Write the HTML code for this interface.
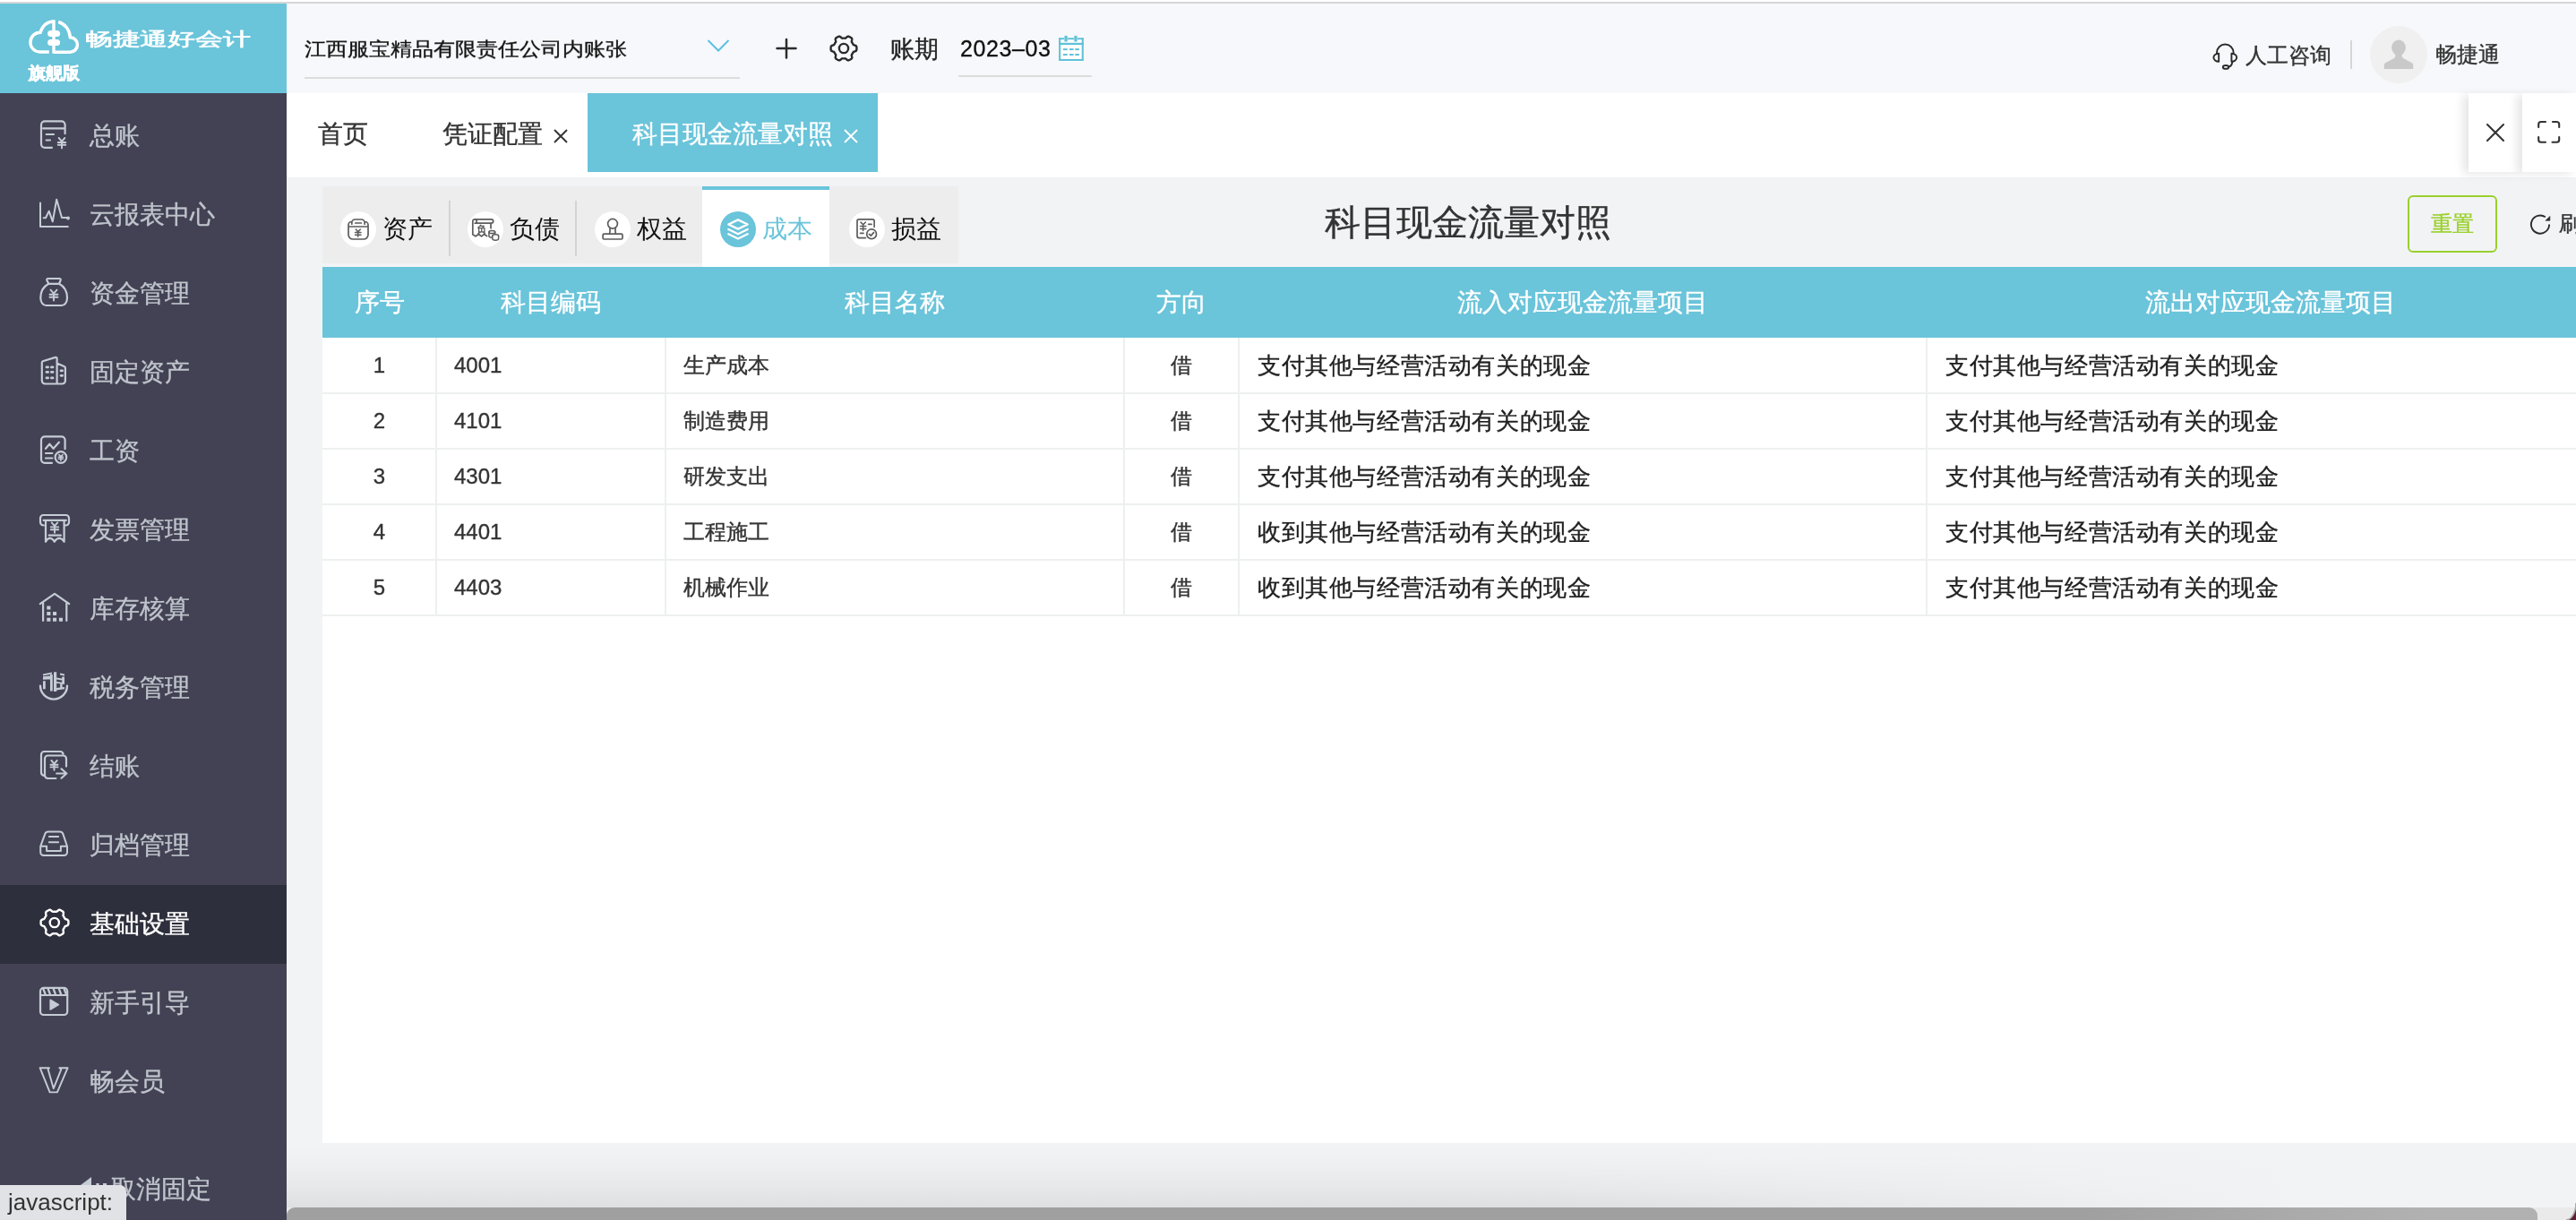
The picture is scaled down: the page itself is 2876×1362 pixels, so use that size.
<!DOCTYPE html>
<html><head><meta charset="utf-8">
<style>
*{margin:0;padding:0;box-sizing:border-box}
html,body{width:2876px;height:1362px;overflow:hidden;background:#fff;font-family:"Liberation Sans",sans-serif;color:#333}
.abs{position:absolute}
svg{will-change:transform}
.hd,.td,.th,.mi .t,.st span{will-change:transform;-webkit-text-stroke:0.35px currentColor}
#topline{left:0;top:2px;width:2876px;height:2px;background:#d6d6d8}
#logo{left:0;top:4px;width:320px;height:100px;background:#6ac4da}
#side{left:0;top:104px;width:320px;height:1258px;background:#434254}
#hdr{left:320px;top:4px;width:2556px;height:100px;background:#f7f8fb}
#tabbar{left:320px;top:104px;width:2556px;height:94px;background:#fff}
#content{left:320px;top:198px;width:2556px;height:1164px;background:#f2f3f5}
.mi{position:absolute;left:0;width:320px;height:88px}
.mi .t{position:absolute;left:100px;top:0;line-height:88px;font-size:28px;color:#bfc4cc;white-space:nowrap}
.mi svg{position:absolute;left:36px;top:18px}
.mi.act{background:#2e2f3c}
.mi.act .t{color:#fff}
.hd{position:absolute;white-space:nowrap}
.logo-t{font-size:31px;color:#fff;line-height:40px;font-weight:500;transform:scaleY(0.66);transform-origin:0 50%;letter-spacing:-0.3px;-webkit-text-stroke:1px #fff}
#subbar{left:360px;top:208px;width:710px;height:86px;background:#ededed}
.stt{top:236px;line-height:40px;font-size:28px;color:#111;-webkit-text-stroke:0}
.stt.act{color:#6ac4da}
.st svg{position:absolute;left:16px;top:24px}
.st span{position:absolute;left:67px;top:4px;line-height:86px;font-size:28px;color:#111}
.st.act{background:#fff;height:90px;border-top:4px solid #6ac4da}
.st.act svg{top:20px}
.st.act span{color:#6ac4da;line-height:82px;top:0;left:65px}
.sdiv{top:224px;width:2px;height:62px;background:#d4d4d4}
#panel{left:360px;top:298px;width:2516px;height:978px;background:#fff}
#thead{left:360px;top:298px;width:2516px;height:79px;background:#6ac4da}
.th{position:absolute;top:298px;height:79px;line-height:79px;text-align:center;color:#fff;font-size:28px;white-space:nowrap}
.td{position:absolute;height:62px;line-height:62px;padding-left:20px;font-size:24px;color:#333;white-space:nowrap}
.td.c{text-align:center;padding-left:0}
.td.big{font-size:26px;padding-left:21px;letter-spacing:0.6px;color:#1f1f1f}
.hl{left:360px;width:2516px;height:2px;background:#edf0ef}
.vl{top:377px;width:2px;height:310px;background:#edf0ef}
</style></head><body>
<div id="topline" class="abs"></div>
<div id="logo" class="abs"></div>
<div id="side" class="abs"></div>
<div id="hdr" class="abs"></div>
<div id="tabbar" class="abs"></div>
<div id="content" class="abs"></div>
<div class="mi" style="top:108px"><svg width="48" height="48" viewBox="0 0 48 48" fill="none" stroke="#c5ccd5" stroke-width="2.2" stroke-linecap="round" stroke-linejoin="round"><path d="M22 38.8H14a4 4 0 0 1-4-4V13.3a4 4 0 0 1 4-4h18.6a4 4 0 0 1 4 4V23.2M12.2 17.3H35M15.7 24H24M15.7 30.5H20"/><path d="M29.675 28.0L33 31.8L36.325 28.0M28.725 32.94H37.275M28.725 35.79H37.275M33 31.8V39.4" stroke-width="1.9"/></svg><span class="t">总账</span></div>
<div class="mi" style="top:196px"><svg width="48" height="48" viewBox="0 0 48 48" fill="none" stroke="#c5ccd5" stroke-width="2.2" stroke-linecap="round" stroke-linejoin="round"><path d="M9 12.6V39H39.8M12.6 29.3H15L18.7 21.7L22.8 33.3L27.2 8.7L33 29.1H39.8" stroke-width="2"/><circle cx="40" cy="29.4" r="2" fill="#c5ccd5" stroke="none"/></svg><span class="t">云报表中心</span></div>
<div class="mi" style="top:284px"><svg width="48" height="48" viewBox="0 0 48 48" fill="none" stroke="#c5ccd5" stroke-width="2.2" stroke-linecap="round" stroke-linejoin="round"><path d="M17.5 9H30.5a1.3 1.3 0 0 1 1.2 1.7L30 14.8H18.3L16.3 10.7A1.3 1.3 0 0 1 17.5 9Z"/><path d="M18.3 14.8C12.5 18 9.3 24 9.3 30.5C9.3 35.5 12 39 15.5 39H32.8C36.3 39 39 35.5 39 30.5C39 24 36 18 30 14.8"/><path d="M20.5 21.6L24 25.6L27.5 21.6M19.5 26.8H28.5M19.5 29.8H28.5M24 25.6V33.6" stroke-width="1.9"/></svg><span class="t">资金管理</span></div>
<div class="mi" style="top:372px"><svg width="48" height="48" viewBox="0 0 48 48" fill="none" stroke="#c5ccd5" stroke-width="2.2" stroke-linecap="round" stroke-linejoin="round"><path d="M27.6 38.5H14.3a3.5 3.5 0 0 1-3.5-3.5V14.6a1.5 1.5 0 0 1 1-1.4L26 8.9a1.2 1.2 0 0 1 1.6 1.1V38.5M27.6 15.6L36 19.3a1.5 1.5 0 0 1 .9 1.4V35a3.5 3.5 0 0 1-3.5 3.5H27.6"/><path d="M16 19.9h1.6M21.4 19.9h1.6M16 25.4h1.6M21.4 25.4h1.6M16 31.9h1.6M21.4 31.9h1.6M32 23.8h1.6M32 29.3h1.6" stroke-width="2.8"/></svg><span class="t">固定资产</span></div>
<div class="mi" style="top:460px"><svg width="48" height="48" viewBox="0 0 48 48" fill="none" stroke="#c5ccd5" stroke-width="2.2" stroke-linecap="round" stroke-linejoin="round"><path d="M22 38.8H14a4 4 0 0 1-4-4V13.3a4 4 0 0 1 4-4h18.6a4 4 0 0 1 4 4V23.2M15 22.8L19.3 17.7L23.6 22.8L29.9 15.7M15 28H22.4M15 33.5H22.4"/><circle cx="31.9" cy="32.5" r="6.3"/><path d="M29.8 29.6L31.9 31.8L34 29.6M29.3 32.3H34.5M29.3 34.3H34.5M31.9 31.8V36.3" stroke-width="1.6"/></svg><span class="t">工资</span></div>
<div class="mi" style="top:548px"><svg width="48" height="48" viewBox="0 0 48 48" fill="none" stroke="#c5ccd5" stroke-width="2.2" stroke-linecap="round" stroke-linejoin="round"><path d="M12.8 20.5H12.5a3.5 3.5 0 0 1-3.5-3.5V12.5a3.5 3.5 0 0 1 3.5-3.5h25a3.5 3.5 0 0 1 3.5 3.5V17a3.5 3.5 0 0 1-3.5 3.5H37.3M12.6 14.8H37.8M15 14.8V38.8C17.5 33.5 22 33.5 24.8 38.8C27.8 33.5 32.5 33.5 35.6 38.8V14.8M18.7 31.7H31.9"/><path d="M21.675 17.4L25 21.2L28.325 17.4M20.725 22.34H29.275M20.725 25.189999999999998H29.275M25 21.2V28.799999999999997" stroke-width="1.9"/></svg><span class="t">发票管理</span></div>
<div class="mi" style="top:636px"><svg width="48" height="48" viewBox="0 0 48 48" fill="none" stroke="#c5ccd5" stroke-width="2.2" stroke-linecap="round" stroke-linejoin="round"><path d="M8.8 20.2L25 8.9L41.2 20.2M12.1 19V39M38.3 19V39"/><path d="M18.3 24.6h.1M18.3 31.1h.1M25 31.1h.1M18.3 37.8h.1M25 37.8h.1M31.9 37.8h.1" stroke-width="4" stroke-linecap="square"/></svg><span class="t">库存核算</span></div>
<div class="mi" style="top:724px"><svg width="48" height="48" viewBox="0 0 48 48" fill="none" stroke="#c5ccd5" stroke-width="2.2" stroke-linecap="round" stroke-linejoin="round"><path d="M9 23.6A15 15 0 0 0 39 23.6" stroke-width="2.4"/><path fill="#c5ccd5" stroke="none" d="M12 10.6L22 8.5V10.5L12 12.5ZM12 13.2L22 12.2V16.3L12 16.8ZM12 18.2H14.8V27.2H12ZM20 11H22.8V29.5H20ZM24 8.3H27.2V30H24ZM31 9.6L36 10.6V12.6L31 11.6ZM27.2 14.6L36 16V18L27.2 16.6ZM33.2 13.4H36V20.8H33.2ZM27.2 19L36 20.2V22L27.2 20.8ZM31.2 21.5H33.6V25.2L36 24.9V27.2L27.2 28.4V26L31.2 25.6Z"/></svg><span class="t">税务管理</span></div>
<div class="mi" style="top:812px"><svg width="48" height="48" viewBox="0 0 48 48" fill="none" stroke="#c5ccd5" stroke-width="2.2" stroke-linecap="round" stroke-linejoin="round"><path d="M12.8 35.8A3.5 3.5 0 0 1 10 32.3V12.5a3.5 3.5 0 0 1 3.5-3.5H31.3a3.5 3.5 0 0 1 3.3 2.6M26.4 39H17.5a3.5 3.5 0 0 1-3.5-3.5V17a3.5 3.5 0 0 1 3.5-3.5H34.5a3.5 3.5 0 0 1 3.5 3.5V25.6M27.2 33.5H38.4M32.5 28.3L38.3 33.5L32.5 38.8"/><path d="M21.35 19.0L24.5 22.6L27.65 19.0M20.45 23.68H28.55M20.45 26.380000000000003H28.55M24.5 22.6V29.8" stroke-width="1.9"/></svg><span class="t">结账</span></div>
<div class="mi" style="top:900px"><svg width="48" height="48" viewBox="0 0 48 48" fill="none" stroke="#c5ccd5" stroke-width="2.2" stroke-linecap="round" stroke-linejoin="round"><path d="M9.2 26.8V33.5a3.5 3.5 0 0 0 3.5 3.5H35.5a3.5 3.5 0 0 0 3.5-3.5V26.8L34.3 12.9a3.5 3.5 0 0 0-3.3-2.3H17.6a3.5 3.5 0 0 0-3.3 2.3L9.2 26.8H16.1V32.1H31.9V26.8H39M18.9 16.1H29.1M18.9 22.2H29.1" stroke-width="2"/></svg><span class="t">归档管理</span></div>
<div class="mi act" style="top:988px"><svg width="48" height="48" viewBox="0 0 48 48" fill="none" stroke="#fff" stroke-width="2.2" stroke-linecap="round" stroke-linejoin="round"><path d="M40.4 24.0L40.4 25.0L40.3 26.0L39.7 26.9L38.3 27.6L36.9 28.0L36.3 28.7L35.9 29.4L35.6 30.1L35.1 30.8L34.7 31.4L34.5 32.3L34.8 33.8L34.9 35.3L34.4 36.2L33.6 36.8L32.7 37.3L31.8 37.8L30.9 38.2L29.8 38.2L28.6 37.3L27.5 36.3L26.6 36.1L25.8 36.2L25.0 36.2L24.2 36.2L23.4 36.1L22.5 36.3L21.4 37.3L20.2 38.2L19.1 38.2L18.2 37.8L17.3 37.3L16.4 36.8L15.6 36.2L15.1 35.3L15.2 33.8L15.5 32.3L15.3 31.4L14.9 30.8L14.4 30.1L14.1 29.4L13.7 28.7L13.1 28.0L11.7 27.6L10.3 26.9L9.7 26.0L9.6 25.0L9.6 24.0L9.6 23.0L9.7 22.0L10.3 21.1L11.7 20.4L13.1 20.0L13.7 19.3L14.1 18.6L14.4 17.9L14.9 17.2L15.3 16.6L15.5 15.7L15.2 14.2L15.1 12.7L15.6 11.8L16.4 11.2L17.3 10.7L18.2 10.2L19.1 9.8L20.2 9.8L21.4 10.7L22.5 11.7L23.4 11.9L24.2 11.8L25.0 11.8L25.8 11.8L26.6 11.9L27.5 11.7L28.6 10.7L29.8 9.8L30.9 9.8L31.8 10.2L32.7 10.7L33.6 11.2L34.4 11.8L34.9 12.7L34.8 14.2L34.5 15.7L34.7 16.6L35.1 17.2L35.6 17.9L35.9 18.6L36.3 19.3L36.9 20.0L38.3 20.4L39.7 21.1L40.3 22.0L40.4 23.0Z" stroke-width="2.4"/><circle cx="24.8" cy="24" r="5.1" stroke-width="2.4"/></svg><span class="t">基础设置</span></div>
<div class="mi" style="top:1076px"><svg width="48" height="48" viewBox="0 0 48 48" fill="none" stroke="#c5ccd5" stroke-width="2.2" stroke-linecap="round" stroke-linejoin="round"><rect x="9" y="8.9" width="30.2" height="30.1" rx="3.8"/><path d="M9 17H39.2M12.2 9.5L14.8 16.5M17.5 9.5L20.1 16.5M23.5 9.5L26.1 16.5M29.7 9.5L32.3 16.5M35.4 9.5L37.5 15"/><path d="M20.2 22.2L29.4 27.6L20.2 33Z" fill="#c5ccd5" stroke-width="1.6"/></svg><span class="t">新手引导</span></div>
<div class="mi" style="top:1164px"><svg width="48" height="48" viewBox="0 0 48 48" fill="none" stroke="#c5ccd5" stroke-width="2.2" stroke-linecap="round" stroke-linejoin="round"><path d="M8.6 10.2H19L17.6 11.8L23.8 33.2L32.3 11.8L30.3 10.2H39.6L27.9 37.4H19.6Z" stroke-width="1.9"/></svg><span class="t">畅会员</span></div>

<div id="subbar" class="abs"></div>
<div class="abs sdiv" style="left:501px"></div><div class="abs sdiv" style="left:642px"></div><div class="abs" style="left:784px;top:208px;width:142px;height:90px;background:#fff;border-top:4px solid #6ac4da"></div><div class="abs" style="left:376px;top:232px"><svg width="48" height="48" viewBox="0 0 48 48" fill="none" stroke="#5c5c5c" stroke-width="1.7" stroke-linecap="round" stroke-linejoin="round"><circle cx="24" cy="24" r="20" fill="#fff" stroke="none"/><path d="M16.8 18.2V16.5a3.5 3.5 0 0 1 3.5-3.5H27.6a3.5 3.5 0 0 1 3.5 3.5V18.2M20.8 17H27.4M13 21H35M16.6 15.5A3.6 3.6 0 0 0 13 19.1V30a5 5 0 0 0 5 5H30a5 5 0 0 0 5-5V19.1A3.6 3.6 0 0 0 31.4 15.5"/><path d="M21.3 24L23.7 26.8L26.3 24M20.5 27.6H27M20.5 30.2H27M23.7 26.8V32.3" stroke-width="1.5"/></svg></div><div class="hd stt" style="left:427px">资产</div>
<div class="abs" style="left:518px;top:232px"><svg width="48" height="48" viewBox="0 0 48 48" fill="none" stroke="#5c5c5c" stroke-width="1.7" stroke-linecap="round" stroke-linejoin="round"><circle cx="24" cy="24" r="20" fill="#fff" stroke="none"/><path d="M25.6 31.5L22.5 29.5L19.5 31.8L16.5 29.5L13 31.8L9.8 29.8V15a2.2 2.2 0 0 1 2.2-2.2H30.5a2.2 2.2 0 0 1 0 4.4H12.2M12 12.8a2.2 2.2 0 0 1 2.2 2.2V17M30 17.2V22.8"/><path d="M18.8 19.2L15.6 22.4M17.8 20.4H22.4L21 21.9M16.6 22.6H22.9V26.9H16.6ZM19.75 23.6V25.9M18.4 27.2L15.8 28.6M21.2 27.2L23.6 28.6" stroke-width="1.3"/><ellipse cx="31.3" cy="27" rx="3.4" ry="1.6" stroke-width="1.5"/><path d="M27.9 27V31.5a3.4 1.6 0 0 0 6.8 0V27" stroke-width="1.5"/><ellipse cx="35.2" cy="31.4" rx="3.4" ry="1.6" fill="#fff" stroke-width="1.5"/><path d="M31.8 31.4V34.6a3.4 1.6 0 0 0 6.8 0V31.4" fill="#fff" stroke-width="1.5"/></svg></div><div class="hd stt" style="left:569px">负债</div>
<div class="abs" style="left:660px;top:232px"><svg width="48" height="48" viewBox="0 0 48 48" fill="none" stroke="#5c5c5c" stroke-width="1.7" stroke-linecap="round" stroke-linejoin="round"><circle cx="24" cy="24" r="20" fill="#fff" stroke="none"/><circle cx="24" cy="17.8" r="5.4"/><path d="M20.9 22.4Q21.3 26 20.6 29.1M27.1 22.4Q26.7 26 27.4 29.1"/><rect x="13.1" y="29.2" width="21.9" height="5.8" rx="1.3"/></svg></div><div class="hd stt" style="left:711px">权益</div>
<div class="abs" style="left:800px;top:232px"><svg width="48" height="48" viewBox="0 0 48 48" fill="none" stroke="#fff" stroke-width="2.3" stroke-linecap="round" stroke-linejoin="round"><circle cx="24" cy="24" r="20" fill="#6ac4da" stroke="none"/><path d="M13.3 18.5L24 13.4L34.7 18.5L24 23.6Z"/><path d="M13.3 24L24 29.2L34.7 24M13.3 29.3L24 34.5L34.7 29.3"/></svg></div><div class="hd stt act" style="left:851px">成本</div>
<div class="abs" style="left:944px;top:232px"><svg width="48" height="48" viewBox="0 0 48 48" fill="none" stroke="#5c5c5c" stroke-width="1.7" stroke-linecap="round" stroke-linejoin="round"><circle cx="24" cy="24" r="20" fill="#fff" stroke="none"/><path d="M22.4 33.6H15a2 2 0 0 1-2-2V14.8a2 2 0 0 1 2-2H30.1a2 2 0 0 1 2 2V21.3M25.6 18.3H29.1M16.5 28.3H20"/><path d="M17 16.1L19.6 18.7L22.3 16.1M16.5 20.5H22.8M16.5 23.6H22.8M19.6 18.7V25.6" stroke-width="1.5"/><circle cx="29.1" cy="29.3" r="5.4"/><path d="M26.4 29.3L28.3 31.1L31.5 27.6"/></svg></div><div class="hd stt" style="left:995px">损益</div>

<div id="panel" class="abs"></div>
<div id="thead" class="abs"></div>
<div class="th" style="left:360px;width:127px">序号</div><div class="th" style="left:487px;width:256px">科目编码</div><div class="th" style="left:743px;width:511px">科目名称</div><div class="th" style="left:1254px;width:129px">方向</div><div class="th" style="left:1383px;width:768px">流入对应现金流量项目</div><div class="th" style="left:2151px;width:768px">流出对应现金流量项目</div><div class="td c" style="left:360px;top:377px;width:127px">1</div><div class="td" style="left:487px;top:377px;width:256px">4001</div><div class="td" style="left:743px;top:377px;width:511px">生产成本</div><div class="td c" style="left:1254px;top:377px;width:129px">借</div><div class="td big" style="left:1383px;top:377px;width:768px">支付其他与经营活动有关的现金</div><div class="td big" style="left:2151px;top:377px;width:768px">支付其他与经营活动有关的现金</div><div class="abs hl" style="top:438px"></div><div class="td c" style="left:360px;top:439px;width:127px">2</div><div class="td" style="left:487px;top:439px;width:256px">4101</div><div class="td" style="left:743px;top:439px;width:511px">制造费用</div><div class="td c" style="left:1254px;top:439px;width:129px">借</div><div class="td big" style="left:1383px;top:439px;width:768px">支付其他与经营活动有关的现金</div><div class="td big" style="left:2151px;top:439px;width:768px">支付其他与经营活动有关的现金</div><div class="abs hl" style="top:500px"></div><div class="td c" style="left:360px;top:501px;width:127px">3</div><div class="td" style="left:487px;top:501px;width:256px">4301</div><div class="td" style="left:743px;top:501px;width:511px">研发支出</div><div class="td c" style="left:1254px;top:501px;width:129px">借</div><div class="td big" style="left:1383px;top:501px;width:768px">支付其他与经营活动有关的现金</div><div class="td big" style="left:2151px;top:501px;width:768px">支付其他与经营活动有关的现金</div><div class="abs hl" style="top:562px"></div><div class="td c" style="left:360px;top:563px;width:127px">4</div><div class="td" style="left:487px;top:563px;width:256px">4401</div><div class="td" style="left:743px;top:563px;width:511px">工程施工</div><div class="td c" style="left:1254px;top:563px;width:129px">借</div><div class="td big" style="left:1383px;top:563px;width:768px">收到其他与经营活动有关的现金</div><div class="td big" style="left:2151px;top:563px;width:768px">支付其他与经营活动有关的现金</div><div class="abs hl" style="top:624px"></div><div class="td c" style="left:360px;top:625px;width:127px">5</div><div class="td" style="left:487px;top:625px;width:256px">4403</div><div class="td" style="left:743px;top:625px;width:511px">机械作业</div><div class="td c" style="left:1254px;top:625px;width:129px">借</div><div class="td big" style="left:1383px;top:625px;width:768px">收到其他与经营活动有关的现金</div><div class="td big" style="left:2151px;top:625px;width:768px">支付其他与经营活动有关的现金</div><div class="abs hl" style="top:686px"></div><div class="abs vl" style="left:486px"></div><div class="abs vl" style="left:742px"></div><div class="abs vl" style="left:1254px"></div><div class="abs vl" style="left:1382px"></div><div class="abs vl" style="left:2150px"></div>

<div class="abs" style="left:28px;top:16px"><svg width="64" height="48" viewBox="0 0 64 48" fill="none" stroke="#fff" stroke-width="3.5"><path d="M26.8 42H16.5A10.85 10.85 0 0 1 17 20.3C19.5 12.5 25 8.2 32 8.05"/><path d="M32 6.3V43.7" stroke-width="3.4"/><path d="M37.2 8.45C44 10.5 49.5 16.5 50.4 25.65A8.25 8.25 0 0 1 50 42.15H32"/><path d="M28.6 21.55H35.6M28.6 31.4H35.6" stroke-width="7" stroke-linecap="round"/></svg></div>
<div class="hd logo-t" style="left:95px;top:24px">畅捷通好会计</div>
<div class="hd" style="left:32px;top:68px;font-size:19px;font-weight:bold;color:#fff;line-height:28px;-webkit-text-stroke:0.6px #fff">旗舰版</div>
<div class="hd" style="left:340px;top:34px;font-size:24px;color:#111;line-height:40px;transform:scaleY(0.88);transform-origin:0 70%">江西服宝精品有限责任公司内账张</div>
<div class="abs" style="left:340px;top:86px;width:486px;height:2px;background:#dcdcdc"></div>
<svg class="abs" style="left:788px;top:42px" width="28" height="18" viewBox="0 0 28 18" fill="none" stroke="#5bc0de" stroke-width="2"><path d="M2.5 3L14 14.5L25.5 3"/></svg>
<svg class="abs" style="left:864px;top:41px" width="28" height="27" viewBox="0 0 28 27" stroke="#2b2b2b" stroke-width="2.5" stroke-linecap="round"><path d="M3.5 13H24.5M14 3V23.5"/></svg>
<div class="abs" style="left:924px;top:36px"><svg width="36" height="36" viewBox="0 0 36 36" fill="none" stroke="#2b2b2b" stroke-width="2.4"><path d="M32.4 18.0L32.4 18.9L32.3 19.9L31.8 20.7L30.5 21.3L29.1 21.8L28.5 22.4L28.2 23.0L27.9 23.7L27.5 24.3L27.0 24.9L26.8 25.7L27.1 27.1L27.3 28.6L26.8 29.4L26.0 30.0L25.2 30.5L24.4 30.9L23.5 31.3L22.5 31.3L21.3 30.5L20.3 29.5L19.5 29.3L18.7 29.4L18.0 29.4L17.3 29.4L16.5 29.3L15.7 29.5L14.7 30.5L13.5 31.3L12.5 31.3L11.6 30.9L10.8 30.5L10.0 30.0L9.2 29.4L8.7 28.6L8.9 27.1L9.2 25.7L9.0 24.9L8.5 24.3L8.1 23.7L7.8 23.0L7.5 22.4L6.9 21.8L5.5 21.3L4.2 20.7L3.7 19.9L3.6 18.9L3.6 18.0L3.6 17.1L3.7 16.1L4.2 15.3L5.5 14.7L6.9 14.2L7.5 13.6L7.8 13.0L8.1 12.3L8.5 11.7L9.0 11.1L9.2 10.3L8.9 8.9L8.7 7.4L9.2 6.6L10.0 6.0L10.8 5.5L11.6 5.1L12.5 4.7L13.5 4.7L14.7 5.5L15.7 6.5L16.5 6.7L17.3 6.6L18.0 6.6L18.7 6.6L19.5 6.7L20.3 6.5L21.3 5.5L22.5 4.7L23.5 4.7L24.4 5.1L25.2 5.5L26.0 6.0L26.8 6.6L27.3 7.4L27.1 8.9L26.8 10.3L27.0 11.1L27.5 11.7L27.9 12.3L28.2 13.0L28.5 13.6L29.1 14.2L30.5 14.7L31.8 15.3L32.3 16.1L32.4 17.1Z"/><circle cx="18" cy="18" r="5.1"/></svg></div>
<div class="hd" style="left:994px;top:35px;font-size:27px;color:#222;line-height:40px">账期</div>
<div class="hd" style="left:1072px;top:34px;font-size:25px;color:#111;line-height:40px;letter-spacing:0.6px">2023–03</div>
<div class="abs" style="left:1180px;top:38px"><svg width="32" height="32" viewBox="0 0 32 32" fill="#62c1d9"><rect x="1.8" y="2.2" width="28.4" height="28.8" fill="#fff"/><rect x="2.1" y="4.2" width="2.1" height="25.8"/><rect x="27.7" y="4.2" width="2.1" height="25.8"/><rect x="2.1" y="27.9" width="27.7" height="2.1"/><rect x="2.1" y="4.2" width="6" height="2"/><rect x="12" y="4.2" width="7" height="2"/><rect x="23" y="4.2" width="6.8" height="2"/><rect x="2.1" y="9.8" width="27.7" height="2.3"/><rect x="8.4" y="1.9" width="3.3" height="6.6"/><rect x="19.3" y="1.9" width="3.3" height="6.6"/><rect x="7" y="16.1" width="4.7" height="2"/><rect x="14" y="16.1" width="4.6" height="2"/><rect x="20.3" y="16.1" width="4.6" height="2"/><rect x="7" y="22" width="4.7" height="2"/><rect x="14" y="22" width="4.6" height="2"/><rect x="20.3" y="22" width="4.6" height="2"/></svg></div>
<div class="abs" style="left:1070px;top:84px;width:149px;height:2px;background:#dcdcdc;border-radius:1px"></div>
<div class="abs" style="left:2464px;top:42px"><svg width="40" height="40" viewBox="0 0 40 40" fill="none" stroke="#2b2b2b" stroke-width="1.9" stroke-linejoin="round"><path d="M11 18.5V16.8A9.3 9.3 0 0 1 29.6 16.8V18.5"/><path d="M13.2 17.8V26.8A5.8 4.5 0 0 1 13.2 17.8Z"/><path d="M27.4 17.8V26.8A5.8 4.5 0 0 0 27.4 17.8Z"/><path d="M28.3 26.8C28 30 26.5 32.2 23.8 32.8"/><ellipse cx="21" cy="32.9" rx="3.2" ry="1.9"/></svg></div>
<div class="hd" style="left:2507px;top:42px;font-size:24px;color:#333;line-height:40px">人工咨询</div>
<div class="abs" style="left:2624px;top:45px;width:2px;height:32px;background:#d6d6d6"></div>
<div class="abs" style="left:2644px;top:28px"><svg width="68" height="68" viewBox="0 0 68 68"><circle cx="34" cy="33" r="32" fill="#f0f0f0"/><ellipse cx="34" cy="25.1" rx="7.9" ry="8.6" fill="#c9c9c9"/><path d="M30 32C30.8 35 30.3 36.3 28 37.5L19.5 42C18.3 42.7 17.8 43.8 17.8 45V49.1H50.2V45C50.2 43.8 49.7 42.7 48.5 42L40 37.5C37.7 36.3 37.2 35 38 32Z" fill="#c9c9c9"/></svg></div>
<div class="hd" style="left:2719px;top:41px;font-size:24px;color:#333;line-height:40px">畅捷通</div>
<div class="hd" style="left:355px;top:130px;font-size:28px;color:#333;line-height:40px">首页</div>
<div class="hd" style="left:494px;top:130px;font-size:28px;color:#333;line-height:40px">凭证配置</div>
<div class="abs" style="left:617px;top:143px"><svg width="18" height="18" viewBox="0 0 18 18" stroke="#333" stroke-width="1.9"><path d="M2 2L16 16M16 2L2 16"/></svg></div>
<div class="abs" style="left:656px;top:104px;width:324px;height:88px;background:#6ac4da"></div>
<div class="hd" style="left:706px;top:130px;font-size:28px;color:#fff;line-height:40px">科目现金流量对照</div>
<div class="abs" style="left:941px;top:143px"><svg width="18" height="18" viewBox="0 0 18 18" stroke="#fff" stroke-width="1.9"><path d="M2 2L16 16M16 2L2 16"/></svg></div>
<div class="abs" style="left:2756px;top:104px;width:60px;height:88px;background:#fff;box-shadow:-6px 2px 10px rgba(0,0,0,0.10)"></div>
<div class="abs" style="left:2816px;top:104px;width:60px;height:88px;background:#fff;box-shadow:-6px 2px 10px rgba(0,0,0,0.10)"></div>
<div class="abs" style="left:2774px;top:136px"><svg width="24" height="24" viewBox="0 0 24 24" stroke="#333" stroke-width="2.1" stroke-linecap="round"><path d="M3 3L21 21M21 3L3 21"/></svg></div>
<div class="abs" style="left:2832px;top:134px"><svg width="28" height="28" viewBox="0 0 28 28" fill="none" stroke="#333" stroke-width="2.1" stroke-linecap="round"><path d="M10 2H5A2.8 2.8 0 0 0 2.2 4.8V8M18 2H22.8A2.8 2.8 0 0 1 25.2 4.8V8M2.2 19V22A2.8 2.8 0 0 0 5 24.8H10M25.2 19V22A2.8 2.8 0 0 1 22.4 24.8H17.5"/></svg></div>
<div class="hd" style="left:1479px;top:222px;font-size:40px;color:#333;line-height:52px">科目现金流量对照</div>
<div class="abs" style="left:2688px;top:218px;width:100px;height:64px;border:2px solid #9bd02e;border-radius:6px"></div>
<div class="hd" style="left:2714px;top:232px;font-size:24px;color:#9bd02e;line-height:36px">重置</div>
<div class="abs" style="left:2820px;top:235px"><svg width="32" height="32" viewBox="0 0 32 32" fill="none" stroke="#2b2b2b" stroke-width="1.9"><path d="M26.1 15.5A10.1 10.1 0 1 1 21.8 7.3"/><path d="M26.9 6.4V11.3H22Z" fill="#2b2b2b" stroke-width="0.6" stroke-linejoin="round"/></svg></div>
<div class="hd" style="left:2857px;top:232px;font-size:24px;color:#333;line-height:36px">刷新</div>
<div class="hd" style="left:124px;top:1308px;font-size:28px;color:#bfc4cc;line-height:40px">取消固定</div>
<svg class="abs" style="left:80px;top:1310px" width="44" height="36" viewBox="0 0 44 36"><path d="M6 16L22 4V28Z" fill="#c5ccd5"/><rect x="27.4" y="11" width="3.2" height="10" fill="#c5ccd5"/><rect x="35" y="11" width="4" height="10" fill="#c5ccd5"/></svg>
<div class="abs" style="left:0;top:1323px;width:141px;height:39px;background:#e1e2e5;border-top-right-radius:7px"></div>
<div class="hd" style="left:9px;top:1323px;font-size:26px;color:#333;line-height:38px;-webkit-text-stroke:0">javascript:</div>
<div class="abs" style="left:320px;top:1276px;width:2556px;height:72px;background:linear-gradient(to right,rgba(242,243,245,0) 0%,rgba(242,243,245,0) 55%,#f2f3f5 88%),linear-gradient(#f2f3f5 0%,#eff0f2 30%,#e7e8ea 70%,#dedfe1 100%)"></div>
<div class="abs" style="left:320px;top:1348px;width:2556px;height:14px;background:#eaeaea"></div>
<div class="abs" style="left:320px;top:1348px;width:2513px;height:24px;background:linear-gradient(to right,#a0a0a0 0%,#a0a0a0 80%,#b1b1b1 95%);border-radius:9px"></div>
<svg class="abs" style="left:2856px;top:1338px" width="20" height="24" viewBox="0 0 20 24"><path d="M20 5A11 19 0 0 1 9 24H20Z" fill="#5e1f33"/><path d="M20 5A11 19 0 0 1 9 24" fill="none" stroke="#a8a8a8" stroke-width="1.6"/></svg>

</body></html>
